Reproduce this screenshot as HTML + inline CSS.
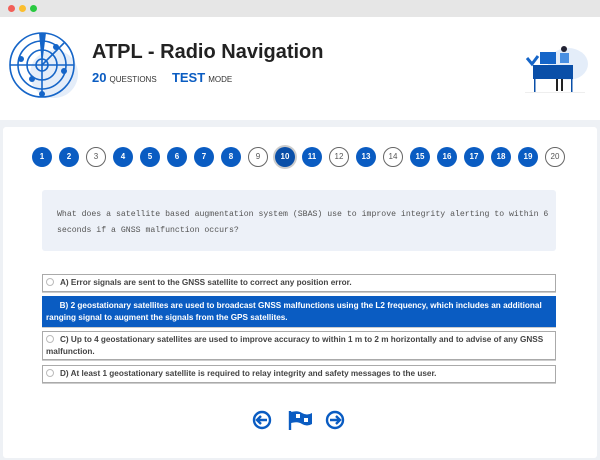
<!DOCTYPE html>
<html><head><style>
*{box-sizing:border-box;margin:0;padding:0}
body{width:600px;height:460px;background:#eef1f5;font-family:"Liberation Sans",sans-serif;position:relative;overflow:hidden}
.bar{position:absolute;left:0;top:0;width:600px;height:17px;background:#e6e6e6}
.dot{position:absolute;top:5px;width:7px;height:7px;border-radius:50%}
.head{position:absolute;left:0;top:17px;width:600px;height:103px;background:#fff}
.card{position:absolute;left:3px;top:127px;width:594px;height:331px;background:#fff;border-radius:3px}
.n{position:absolute;top:147px;width:20px;height:20px;border-radius:50%;background:#0a5cc2;color:#fff;font-size:8px;font-weight:bold;text-align:center;line-height:20px}
.n.o{background:#fff;border:1px solid #666;color:#555;font-weight:normal;line-height:18px}
.n.c{box-shadow:0 0 0 2px #ccc;background:#0a4fa8}
.q{position:absolute;left:42px;top:190px;width:514px;height:61px;background:#edf1f8;border-radius:3px;font-family:"Liberation Mono",monospace;font-size:8.2px;color:#555;padding:17px 0 15px 15px;line-height:16px;white-space:nowrap;overflow:hidden}
.opt{position:absolute;left:42px;width:514px;border:1px solid #aaa;box-shadow:0 1px 0 #ccc;font-size:8.2px;font-weight:bold;color:#444;padding:2px 2px 2px 3px;line-height:11.5px}
.opt i{display:inline-block;width:8px;height:8px;border:1px solid #bbb;border-radius:50%;margin-right:6px;vertical-align:-1px}
.opt.s{background:#0a5cc2;color:#fff;border-color:#0a5cc2;padding:3px 2px 3px 3px}
</style></head><body>
<div class="bar"></div>
<div class="dot" style="left:8px;background:#f25f58"></div>
<div class="dot" style="left:19px;background:#fbbe2e"></div>
<div class="dot" style="left:30px;background:#29c940"></div>
<div class="head">
<svg style="position:absolute;left:6px;top:12px" width="72" height="72" viewBox="0 0 72 72">
<ellipse cx="48" cy="45" rx="24" ry="24" fill="#e4edf9"/>
<g fill="none" stroke="#1565c8" stroke-width="1.6">
<circle cx="36" cy="36" r="32"/><circle cx="36" cy="36" r="24"/><circle cx="36" cy="36" r="15"/><circle cx="36" cy="36" r="6"/>
<line x1="4" y1="36" x2="68" y2="36"/><line x1="36" y1="4" x2="36" y2="68"/><line x1="36" y1="36" x2="58" y2="14"/>
</g>
<path d="M36 36 L33 4 L40 4 Z" fill="#1565c8"/>
<g fill="#1565c8"><circle cx="50" cy="18" r="3"/><circle cx="15" cy="30" r="3"/><circle cx="58" cy="42" r="3"/><circle cx="26" cy="50" r="3"/><circle cx="36" cy="65" r="3"/></g>
</svg>
<div style="position:absolute;left:92px;top:24px;font-size:20px;font-weight:bold;color:#222">ATPL - Radio Navigation</div>
<div style="position:absolute;left:92px;top:53px;font-size:11px;color:#333"><b style="color:#0a5cc2;font-size:13px">20</b> <span style="font-size:8px">QUESTIONS</span> &nbsp;&nbsp;&nbsp; <b style="color:#0a5cc2;font-size:13px">TEST</b> <span style="font-size:8px">MODE</span></div>
<svg style="position:absolute;left:520px;top:27px" width="70" height="50" viewBox="0 0 70 50">
<ellipse cx="48" cy="20" rx="20" ry="16" fill="#e4edf9"/>
<path d="M7 14 L12 20 L18 12" stroke="#1565c8" stroke-width="3" fill="none"/>
<rect x="20" y="8" width="16" height="12" fill="#1565c8"/>
<circle cx="44" cy="5" r="3" fill="#223"/><rect x="40" y="9" width="9" height="10" fill="#4a90e2"/>
<rect x="13" y="21" width="40" height="14" fill="#0a4fa8"/>
<rect x="14" y="35" width="1.5" height="13" fill="#0a4fa8"/><rect x="51" y="35" width="1.5" height="13" fill="#0a4fa8"/>
<rect x="36" y="35" width="2" height="12" fill="#222"/><rect x="41" y="35" width="2" height="12" fill="#222"/>
<rect x="5" y="48" width="60" height="1" fill="#eee"/>
</svg>
</div>
<div class="card"></div>
<div class="n" style="left:32px">1</div><div class="n" style="left:59px">2</div><div class="n o" style="left:86px">3</div><div class="n" style="left:113px">4</div><div class="n" style="left:140px">5</div><div class="n" style="left:167px">6</div><div class="n" style="left:194px">7</div><div class="n" style="left:221px">8</div><div class="n o" style="left:248px">9</div><div class="n c" style="left:275px">10</div><div class="n" style="left:302px">11</div><div class="n o" style="left:329px">12</div><div class="n" style="left:356px">13</div><div class="n o" style="left:383px">14</div><div class="n" style="left:410px">15</div><div class="n" style="left:437px">16</div><div class="n" style="left:464px">17</div><div class="n" style="left:491px">18</div><div class="n" style="left:518px">19</div><div class="n o" style="left:545px">20</div>
<div class="q">What does a satellite based augmentation system (SBAS) use to improve integrity alerting to within 6<br>seconds if a GNSS malfunction occurs?</div>
<div class="opt" style="top:274px"><i></i>A) Error signals are sent to the GNSS satellite to correct any position error.</div>
<div class="opt s" style="top:296px">&nbsp; &nbsp; &nbsp; B) 2 geostationary satellites are used to broadcast GNSS malfunctions using the L2 frequency, which includes an additional ranging signal to augment the signals from the GPS satellites.</div>
<div class="opt" style="top:331px"><i></i>C) Up to 4 geostationary satellites are used to improve accuracy to within 1 m to 2 m horizontally and to advise of any GNSS malfunction.</div>
<div class="opt" style="top:365px"><i></i>D) At least 1 geostationary satellite is required to relay integrity and safety messages to the user.</div>
<svg style="position:absolute;left:252px;top:409px" width="100" height="22" viewBox="0 0 100 22">
<g fill="none" stroke="#0a5cc2" stroke-width="2.4">
<circle cx="10" cy="11" r="8"/><path d="M15 11 H6 M9 7 L5 11 L9 15"/>
<circle cx="83" cy="11" r="8"/><path d="M78 11 H87 M84 7 L88 11 L84 15"/>
</g>
<path d="M38 2 V21" stroke="#0a5cc2" stroke-width="2.4"/>
<path d="M39 3 Q46 1 50 4 Q55 7 60 4 V15 Q55 18 50 15 Q46 12 39 14 Z" fill="#0a5cc2"/>
<path d="M44 5 h4 v4 h-4z M52 9 h4 v4 h-4z" fill="#fff"/>
</svg>
</body></html>
